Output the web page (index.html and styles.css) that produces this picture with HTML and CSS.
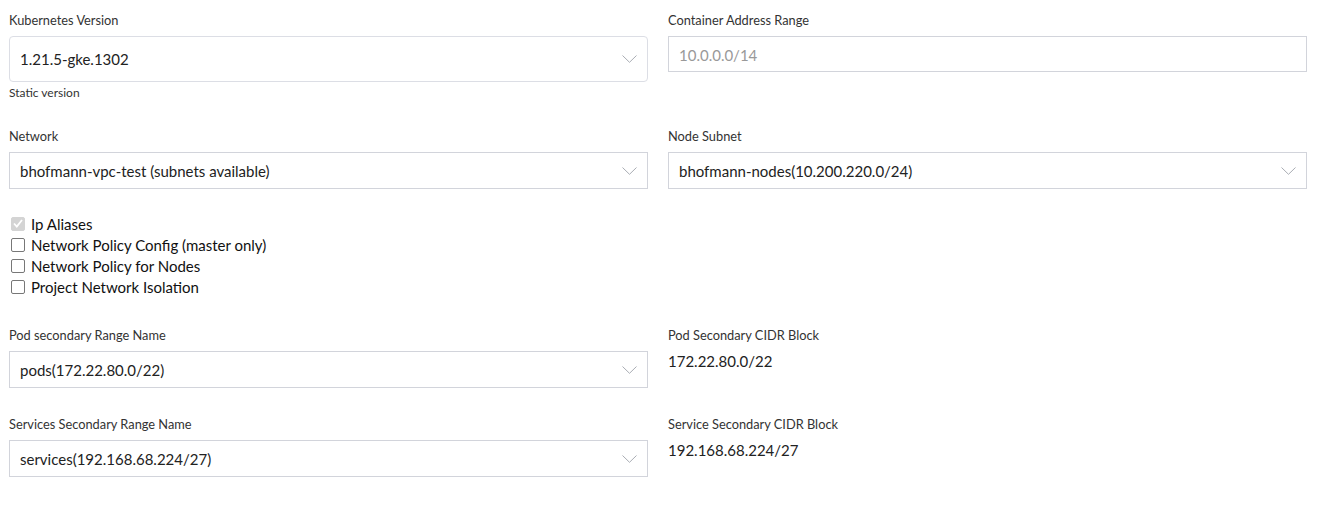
FILE: index.html
```html
<!DOCTYPE html>
<html>
<head>
<meta charset="utf-8">
<link rel="stylesheet" href="styles.css">
</head>
<body>
<div class="form">
  <div class="row row-first">
    <div class="field">
      <div class="label">Kubernetes Version</div>
      <div class="select select-tall">
        <span>1.21.5-gke.1302</span>
        <svg class="chev" width="15" height="8" viewBox="0 0 15 8"><path d="M0.5 0.5 L7.5 7.3 L14.5 0.5" fill="none" stroke="#a9acb3" stroke-width="1"/></svg>
      </div>
      <div class="help">Static version</div>
    </div>
    <div class="field">
      <div class="label">Container Address Range</div>
      <div class="input"><span class="placeholder">10.0.0.0/14</span></div>
    </div>
  </div>

  <div class="row row-second">
    <div class="field">
      <div class="label">Network</div>
      <div class="select">
        <span>bhofmann-vpc-test (subnets available)</span>
        <svg class="chev" width="15" height="8" viewBox="0 0 15 8"><path d="M0.5 0.5 L7.5 7.3 L14.5 0.5" fill="none" stroke="#a9acb3" stroke-width="1"/></svg>
      </div>
    </div>
    <div class="field">
      <div class="label">Node Subnet</div>
      <div class="select">
        <span>bhofmann-nodes(10.200.220.0/24)</span>
        <svg class="chev" width="15" height="8" viewBox="0 0 15 8"><path d="M0.5 0.5 L7.5 7.3 L14.5 0.5" fill="none" stroke="#a9acb3" stroke-width="1"/></svg>
      </div>
    </div>
  </div>

  <div class="checks">
    <label class="check"><span class="box box-disabled"><svg width="10" height="9" viewBox="0 0 10 9"><path d="M1 4.5 L3.8 7.5 L9 1" fill="none" stroke="#fff" stroke-width="1.8"/></svg></span>Ip Aliases</label>
    <label class="check"><span class="box"></span>Network Policy Config (master only)</label>
    <label class="check"><span class="box"></span>Network Policy for Nodes</label>
    <label class="check"><span class="box"></span>Project Network Isolation</label>
  </div>

  <div class="row row-pod">
    <div class="field">
      <div class="label">Pod secondary Range Name</div>
      <div class="select">
        <span>pods(172.22.80.0/22)</span>
        <svg class="chev" width="15" height="8" viewBox="0 0 15 8"><path d="M0.5 0.5 L7.5 7.3 L14.5 0.5" fill="none" stroke="#a9acb3" stroke-width="1"/></svg>
      </div>
    </div>
    <div class="field">
      <div class="label">Pod Secondary CIDR Block</div>
      <div class="value">172.22.80.0/22</div>
    </div>
  </div>

  <div class="row row-svc">
    <div class="field">
      <div class="label">Services Secondary Range Name</div>
      <div class="select">
        <span>services(192.168.68.224/27)</span>
        <svg class="chev" width="15" height="8" viewBox="0 0 15 8"><path d="M0.5 0.5 L7.5 7.3 L14.5 0.5" fill="none" stroke="#a9acb3" stroke-width="1"/></svg>
      </div>
    </div>
    <div class="field">
      <div class="label">Service Secondary CIDR Block</div>
      <div class="value">192.168.68.224/27</div>
    </div>
  </div>
</div>
</body>
</html>
```

FILE: styles.css
```css
* { box-sizing: border-box; }
html, body { margin: 0; padding: 0; background: #fff; }
body {
  font-family: Lato, "Open Sans", "Liberation Sans", sans-serif;
  color: #222;
}
.form {
  padding: 11px 19px 0 9px;
  display: flex;
  flex-direction: column;
}
.row {
  display: grid;
  grid-template-columns: 1fr 1fr;
  column-gap: 20px;
  align-items: start;
}
.row-second { margin-top: 26px; }
.row-pod { margin-top: 29px; }
.row-svc { margin-top: 27px; }
.field { display: flex; flex-direction: column; }
.label {
  font-size: 12.8px;
  line-height: 18px;
  color: #333;
  margin-bottom: 7px;
}
.select, .input {
  height: 37px;
  border: 1px solid #d2d4db;
  display: flex;
  align-items: center;
  justify-content: space-between;
  padding: 0 10px 0 10px;
  font-size: 15px;
  color: #222;
}
.input { height: 36px; padding-top: 1px; }
.select-tall {
  height: 46px;
  border-radius: 4px;
  border-color: #dcdee5;
}
.chev { flex: none; }
.placeholder { color: #999; }
.help {
  font-size: 12px;
  line-height: 16px;
  margin-top: 3px;
  color: #333;
}
.checks {
  margin-top: 24px;
  display: flex;
  flex-direction: column;
  padding-left: 2px;
}
.check {
  display: flex;
  align-items: center;
  height: 21px;
  font-size: 15px;
  color: #111;
}
.box {
  width: 14px;
  height: 14px;
  border: 1px solid #777;
  border-radius: 2px;
  margin-right: 6px;
  display: inline-flex;
  align-items: center;
  justify-content: center;
  background: #fff;
  flex: none;
}
.box-disabled {
  background: #d4d4d4;
  border-color: #d4d4d4;
}
.value {
  font-size: 15px;
  line-height: 20px;
  color: #222;
}
```
